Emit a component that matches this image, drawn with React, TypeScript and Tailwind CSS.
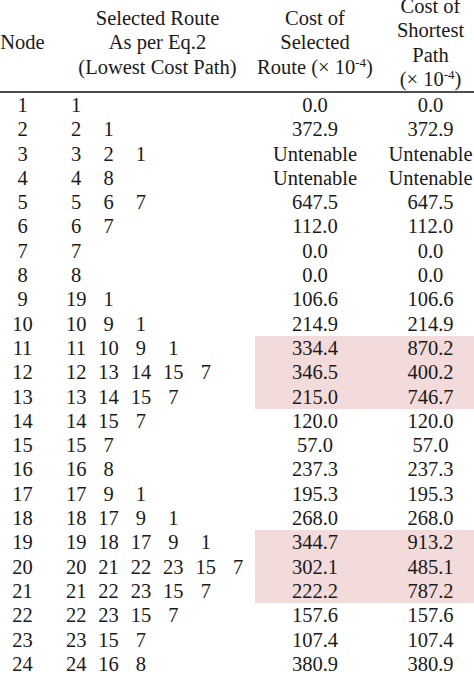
type Row = {
    node: number
    route: number[]
    selected: string
    shortest: string
    highlight?: boolean
}

const rows: Row[] = [
    { node: 1, route: [1], selected: "0.0", shortest: "0.0" },
    { node: 2, route: [2, 1], selected: "372.9", shortest: "372.9" },
    { node: 3, route: [3, 2, 1], selected: "Untenable", shortest: "Untenable" },
    { node: 4, route: [4, 8], selected: "Untenable", shortest: "Untenable" },
    { node: 5, route: [5, 6, 7], selected: "647.5", shortest: "647.5" },
    { node: 6, route: [6, 7], selected: "112.0", shortest: "112.0" },
    { node: 7, route: [7], selected: "0.0", shortest: "0.0" },
    { node: 8, route: [8], selected: "0.0", shortest: "0.0" },
    { node: 9, route: [19, 1], selected: "106.6", shortest: "106.6" },
    { node: 10, route: [10, 9, 1], selected: "214.9", shortest: "214.9" },
    { node: 11, route: [11, 10, 9, 1], selected: "334.4", shortest: "870.2", highlight: true },
    { node: 12, route: [12, 13, 14, 15, 7], selected: "346.5", shortest: "400.2", highlight: true },
    { node: 13, route: [13, 14, 15, 7], selected: "215.0", shortest: "746.7", highlight: true },
    { node: 14, route: [14, 15, 7], selected: "120.0", shortest: "120.0" },
    { node: 15, route: [15, 7], selected: "57.0", shortest: "57.0" },
    { node: 16, route: [16, 8], selected: "237.3", shortest: "237.3" },
    { node: 17, route: [17, 9, 1], selected: "195.3", shortest: "195.3" },
    { node: 18, route: [18, 17, 9, 1], selected: "268.0", shortest: "268.0" },
    { node: 19, route: [19, 18, 17, 9, 1], selected: "344.7", shortest: "913.2", highlight: true },
    { node: 20, route: [20, 21, 22, 23, 15, 7], selected: "302.1", shortest: "485.1", highlight: true },
    { node: 21, route: [21, 22, 23, 15, 7], selected: "222.2", shortest: "787.2", highlight: true },
    { node: 22, route: [22, 23, 15, 7], selected: "157.6", shortest: "157.6" },
    { node: 23, route: [23, 15, 7], selected: "107.4", shortest: "107.4" },
    { node: 24, route: [24, 16, 8], selected: "380.9", shortest: "380.9" },
]

const Exp = () => <sup className="text-[13px]">-4</sup>

const App = () => {
    return (
        <div className="h-[674px] w-[474px] overflow-hidden bg-white text-[#1a1a1a] [font-family:'Liberation_Serif','Times_New_Roman',serif] text-[20.5px] leading-[24.3px]">
            <div className="-mt-[6px]">
                {/* header */}
                <div className="grid grid-cols-[45px_210px_120px_99px] h-[97px] items-center text-center">
                    <div>Node</div>
                    <div className="pl-[15px]">
                        Selected Route
                        <br />
                        As per Eq.2
                        <br />
                        (Lowest Cost Path)
                    </div>
                    <div className="whitespace-nowrap">
                        Cost of
                        <br />
                        Selected
                        <br />
                        Route (× 10<Exp />)
                    </div>
                    <div className="pl-3 whitespace-nowrap">
                        Cost of
                        <br />
                        Shortest
                        <br />
                        Path
                        <br />
                        (× 10<Exp />)
                    </div>
                </div>
                <div className="h-[2px] bg-[#4d4d4d]" />

                {/* body */}
                {rows.map((r) => (
                    <div key={r.node} className="grid grid-cols-[45px_210px_120px_99px] h-[24.3px]">
                        <div className="text-center">{r.node}</div>
                        <div className="flex pl-[15px]">
                            {r.route.map((n, i) => (
                                <span key={i} className="w-[32.4px] text-center">
                                    {n}
                                </span>
                            ))}
                        </div>
                        <div className={`text-center ${r.highlight ? "bg-[#f3dadb]" : ""}`}>{r.selected}</div>
                        <div className={`text-center pl-3 whitespace-nowrap ${r.highlight ? "bg-[#f3dadb]" : ""}`}>
                            {r.shortest}
                        </div>
                    </div>
                ))}
            </div>
        </div>
    )
}

export default App
